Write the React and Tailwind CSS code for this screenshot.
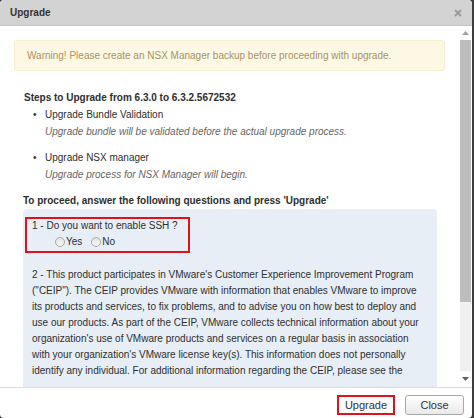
import React from "react";

const ceipLines = [
  "(\"CEIP\"). The CEIP provides VMware with information that enables VMware to improve",
  "its products and services, to fix problems, and to advise you on how best to deploy and",
  "use our products. As part of the CEIP, VMware collects technical information about your",
  "organization's use of VMware products and services on a regular basis in association",
  "with your organization's VMware license key(s). This information does not personally",
  "identify any individual. For additional information regarding the CEIP, please see the",
];

function Radio({ label }) {
  return (
    <label className="flex items-center">
      <span className="w-[10px] h-[10px] rounded-full border border-[#a9a9a9] bg-gradient-to-b from-[#e2e2e2] to-[#f8f8f8]" />
      <span className="ml-[1px]">{label}</span>
    </label>
  );
}

function Step({ title, note }) {
  return (
    <div>
      <div className="flex items-center h-[17px]">
        <span className="w-[10px] ml-[33px] text-[10px]">•</span>
        <span className="ml-[2px]">{title}</span>
      </div>
      <div className="h-[17px] leading-[17px] ml-[45px] italic text-[#666]">{note}</div>
    </div>
  );
}

function Scrollbar() {
  return (
    <div className="w-[13px] flex flex-col bg-white">
      <div className="h-[14px] flex items-center justify-center">
        <svg width="7" height="4" viewBox="0 0 7 4">
          <path d="M0 4 L3.5 0 L7 4 Z" fill="#a0a0a0" />
        </svg>
      </div>
      <div className="h-[262px] mx-[1px] bg-[#bdbdbd]" />
      <div className="flex-1 mx-[1px] bg-[#f0f0f0]" />
      <div className="h-[16px] flex items-center justify-center">
        <svg width="7" height="4" viewBox="0 0 7 4">
          <path d="M0 0 L3.5 4 L7 0 Z" fill="#606060" />
        </svg>
      </div>
    </div>
  );
}

export default function App() {
  return (
    <div className="w-[474px] h-[418px] bg-[#3c3c3c] overflow-hidden">
      <div
        className="w-[472px] h-[418px] bg-white rounded-[4px] overflow-hidden flex flex-col text-[10px] text-[#2e2e2e]"
        style={{ fontFamily: '"Liberation Sans", Arial, sans-serif' }}
      >
        {/* Title bar */}
        <div className="h-[26px] bg-[#d3d3d3] flex items-center justify-between pl-[10px] pr-[10px] border-b border-[#c4c4c4]">
          <span className="font-bold text-[#333]">Upgrade</span>
          <svg width="8" height="8" viewBox="0 0 8 8">
            <path d="M1 1 L7 7 M7 1 L1 7" stroke="#9a9a9a" strokeWidth="1.8" />
          </svg>
        </div>

        {/* Body */}
        <div className="h-[362px] flex border-b border-[#dcdcdc]">
          <div className="flex-1 flex flex-col overflow-hidden pt-[14px]">
            <div className="ml-[14px] w-[431px] h-[31px] shrink-0 flex items-center pl-[12px] bg-[#fcf8e3] border border-[#f7ecd0] rounded-[3px] text-[#ab9168]">
              Warning! Please create an NSX Manager backup before proceeding with upgrade.
            </div>

            <div className="mt-[18px] ml-[24px] h-[17px] leading-[17px] font-bold">
              Steps to Upgrade from 6.3.0 to 6.3.2.5672532
            </div>
            <Step
              title="Upgrade Bundle Validation"
              note="Upgrade bundle will be validated before the actual upgrade process."
            />
            <div className="mt-[9px]">
              <Step title="Upgrade NSX manager" note="Upgrade process for NSX Manager will begin." />
            </div>

            <div className="mt-[10px] ml-[23px] h-[16px] leading-[16px] font-bold">
              To proceed, answer the following questions and press 'Upgrade'
            </div>

            <div className="ml-[23px] w-[414px] flex-1 bg-[#e7eef6] rounded-t-[4px] pt-[8px] pl-[2px]">
              <div className="w-[165px] h-[36px] border-2 border-[#e1111c] pl-[5px]">
                <div className="h-[14px] leading-[14px]">1 - Do you want to enable SSH ?</div>
                <div className="h-[17px] flex items-center pl-[23px] gap-[9px]">
                  <Radio label="Yes" />
                  <Radio label="No" />
                </div>
              </div>

              <div className="ml-[7px] mt-[14px] leading-[16px] whitespace-nowrap">
                <div>2 - This product participates in VMware's Customer Experience Improvement Program</div>
                {ceipLines.map((line) => (
                  <div key={line}>{line}</div>
                ))}
              </div>
            </div>
          </div>
          <Scrollbar />
        </div>

        {/* Footer */}
        <div className="flex-1 flex items-start justify-end gap-[10px] pt-[7px] pr-[8px]">
          <button className="w-[58px] h-[20px] border-2 border-[#e1111c] bg-[#fafafa] text-[11px] text-[#333]">
            Upgrade
          </button>
          <button className="w-[59px] h-[20px] border border-[#a8a8a8] rounded-[3px] bg-gradient-to-b from-white to-[#e9e9e9] text-[11px] text-[#333]">
            Close
          </button>
        </div>
      </div>
    </div>
  );
}
